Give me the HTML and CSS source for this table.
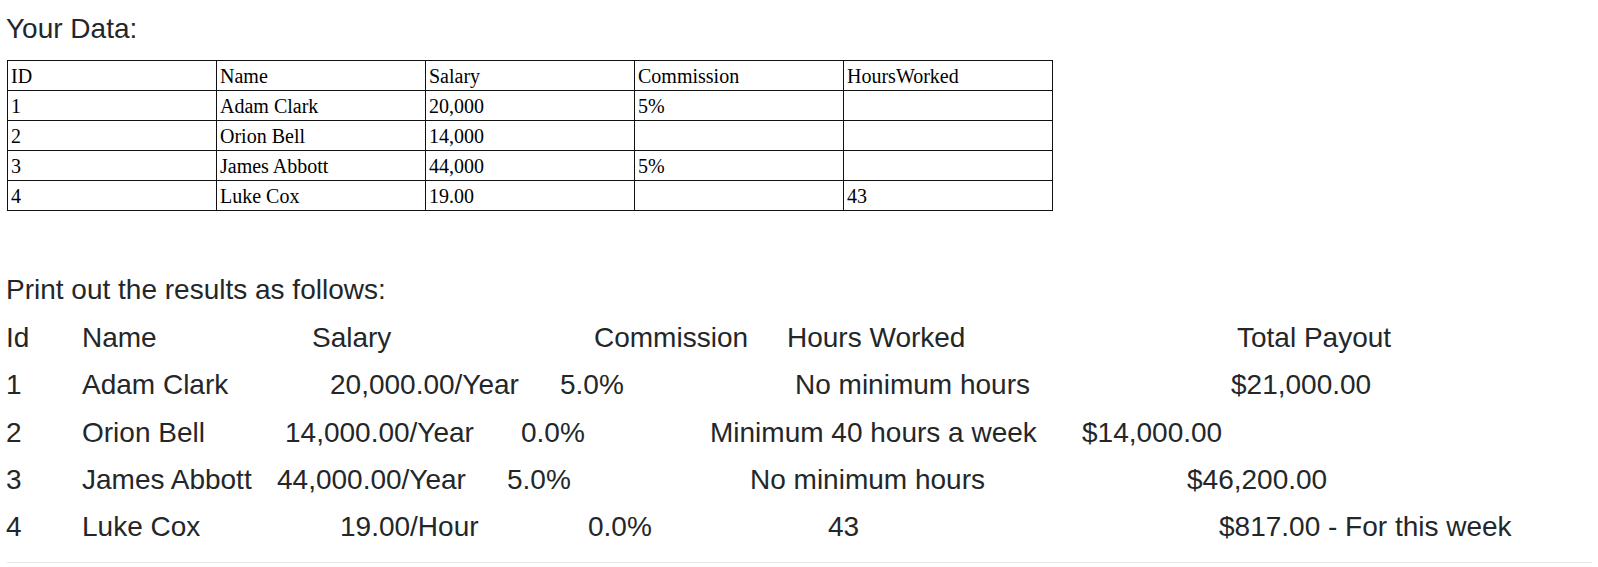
FILE: index.html
```html
<!DOCTYPE html>
<html lang="en">
<head>
<meta charset="utf-8">
<title>Your Data</title>
<link rel="stylesheet" href="styles.css">
</head>
<body>
<div class="post">
  <p class="line">Your Data:</p>
  <table class="data">
    <tr><td>ID</td><td>Name</td><td>Salary</td><td>Commission</td><td>HoursWorked</td></tr>
    <tr><td>1</td><td>Adam Clark</td><td>20,000</td><td>5%</td><td></td></tr>
    <tr><td>2</td><td>Orion Bell</td><td>14,000</td><td></td><td></td></tr>
    <tr><td>3</td><td>James Abbott</td><td>44,000</td><td>5%</td><td></td></tr>
    <tr><td>4</td><td>Luke Cox</td><td>19.00</td><td></td><td>43</td></tr>
  </table>
  <p class="line intro">Print out the results as follows:</p>
  <div class="line row row-head"><span>Id</span><span>Name</span><span>Salary</span><span>Commission</span><span>Hours Worked</span><span>Total Payout</span></div>
  <div class="line row row-1"><span>1</span><span>Adam Clark</span><span>20,000.00/Year</span><span>5.0%</span><span>No minimum hours</span><span>$21,000.00</span></div>
  <div class="line row row-2"><span>2</span><span>Orion Bell</span><span>14,000.00/Year</span><span>0.0%</span><span>Minimum 40 hours a week</span><span>$14,000.00</span></div>
  <div class="line row row-3"><span>3</span><span>James Abbott</span><span>44,000.00/Year</span><span>5.0%</span><span>No minimum hours</span><span>$46,200.00</span></div>
  <div class="line row row-4"><span>4</span><span>Luke Cox</span><span>19.00/Hour</span><span>0.0%</span><span>43</span><span>$817.00 - For this week</span></div>
  <hr class="rule">
</div>
</body>
</html>
```
FILE: styles.css
```css
html, body {
  margin: 0;
  padding: 0;
  background: #fff;
}

.post {
  padding: 5px 6px 0 6px;
  font-family: "Liberation Sans", Arial, sans-serif;
  font-size: 28px;
  color: #242729;
}

.line {
  margin: 0;
  line-height: 47.4px;
  white-space: nowrap;
}

.data {
  margin-top: 8px;
  margin-left: 1px;
  border-collapse: collapse;
  font-family: "Liberation Serif", "Times New Roman", serif;
  font-size: 20px;
  color: #000;
}

.data td {
  width: 202px;
  height: 27px;
  padding: 2px 3px 0 3px;
  line-height: 27px;
  border: 1px solid #111;
  vertical-align: top;
  white-space: nowrap;
}

.intro {
  margin-top: 55px;
}

.row {
  display: grid;
}

.row-head { grid-template-columns: 76px 230px 282px 193px 450px auto; }
.row-1    { grid-template-columns: 76px 248px 230px 235px 436px auto; }
.row-2    { grid-template-columns: 76px 203px 236px 189px 372px auto; }
.row-3    { grid-template-columns: 76px 195px 230px 243px 437px auto; }
.row-4    { grid-template-columns: 76px 258px 248px 240px 391px auto; }

.rule {
  margin: 11px 0 0 1px;
  border: 0;
  height: 1px;
  background: #e4e6e8;
}
```
